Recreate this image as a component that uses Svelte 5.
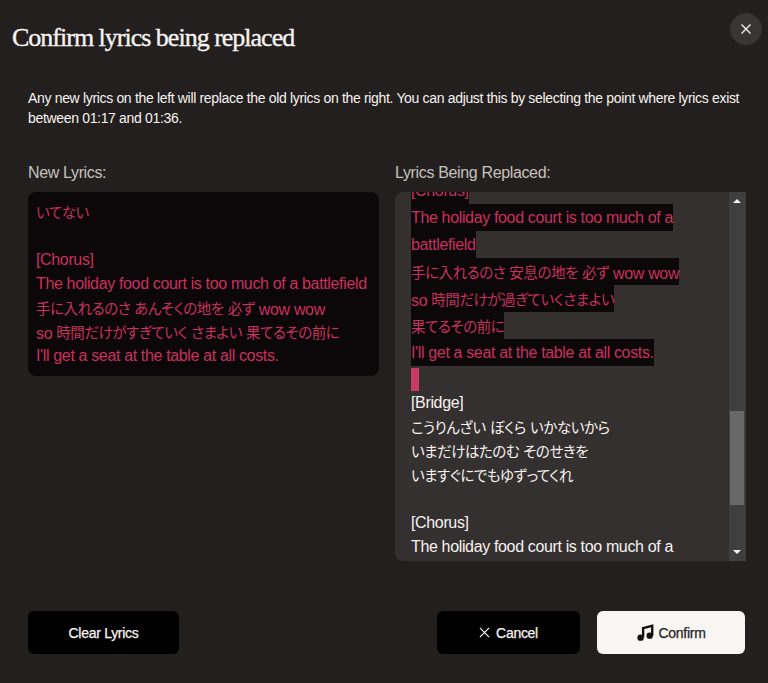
<script lang="ts">
	const newLyrics = [
		'いてない',
		'',
		'[Chorus]',
		'The holiday food court is too much of a battlefield',
		'手に入れるのさ あんそくの地を 必ず wow wow',
		'so 時間だけがすぎていく さまよい 果てるその前に',
		"I'll get a seat at the table at all costs."
	];
	const replaced = [
		'[Chorus]',
		'The holiday food court is too much of a',
		'battlefield',
		'手に入れるのさ 安息の地を 必ず wow wow',
		'so 時間だけが過ぎていくさまよい',
		'果てるその前に',
		"I'll get a seat at the table at all costs."
	];
	const rest = [
		'[Bridge]',
		'こうりんざい ぼくら いかないから',
		'いまだけはたのむ そのせきを',
		'いますぐにでもゆずってくれ',
		'',
		'[Chorus]',
		'The holiday food court is too much of a'
	];

	// japanese runs are set smaller than the latin around them
	function runs(line: string) {
		return line.split(/([\u3040-\u30ff\u4e00-\u9fff]+)/).filter(Boolean);
	}
	const isJa = (s: string) => /[\u3040-\u30ff\u4e00-\u9fff]/.test(s);
</script>

{#snippet lyric(line: string)}
	{#each runs(line) as run}
		{#if isJa(run)}<span class="ja">{run}</span>{:else}{run}{/if}
	{/each}
{/snippet}

<div class="dialog">
	<header class="head">
		<h1>Confirm lyrics being replaced</h1>
		<button type="button" class="close" aria-label="Close">
			<svg width="12" height="12" viewBox="0 0 12 12"><path d="M1.5 1.5l9 9M10.5 1.5l-9 9" /></svg>
		</button>
	</header>

	<p class="intro">
		Any new lyrics on the left will replace the old lyrics on the right. You can adjust this by selecting the point where lyrics exist between 01:17 and 01:36.
	</p>

	<div class="columns">
		<section class="col">
			<div class="label">New Lyrics:</div>
			<div class="new-lyrics">
				{#each newLyrics as line}
					<div class="line">{@render lyric(line)}</div>
				{/each}
			</div>
		</section>

		<section class="col">
			<div class="label">Lyrics Being Replaced:</div>
			<div class="replaced">
				<div class="scroller">
					<div class="content">
						{#each replaced as line}
							<div class="mark">{@render lyric(line)}</div>
						{/each}
						<div class="caret"></div>
						{#each rest as line}
							<div class="line">{@render lyric(line)}</div>
						{/each}
					</div>
				</div>
				<div class="scrollbar">
					<span class="arrow up"></span>
					<span class="thumb"></span>
					<span class="arrow down"></span>
				</div>
			</div>
		</section>
	</div>

	<footer class="actions">
		<button type="button" class="btn dark clear">Clear Lyrics</button>
		<div class="right">
			<button type="button" class="btn dark cancel">
				<svg width="11" height="11" viewBox="0 0 12 12"><path d="M1 1l10 10M11 1L1 11" /></svg>
				Cancel
			</button>
			<button type="button" class="btn light confirm">
				<svg width="19" height="19" viewBox="0 0 24 24">
					<path class="stem" d="M9 18V6.5l11.5-3V16" />
					<circle cx="5.8" cy="18.5" r="4" />
					<circle cx="17.3" cy="16" r="4" />
				</svg>
				Confirm
			</button>
		</div>
	</footer>
</div>

<style>
	:global(body) {
		background: #231f1f;
	}

	.dialog {
		box-sizing: border-box;
		height: 683px;
		background: #231f1f;
		color: #f7f3f0;
		font-family: 'Liberation Sans', 'Noto Sans CJK JP', sans-serif;
		font-size: 16px;
		letter-spacing: -0.022em;
		overflow: hidden;
	}

	.head {
		display: flex;
		justify-content: space-between;
		padding: 13px 6px 0 12px;
		height: 45px;
	}

	h1 {
		margin: 0;
		padding-top: 10px;
		font-family: 'Liberation Serif', serif;
		font-size: 26px;
		line-height: 30px;
		font-weight: 400;
		letter-spacing: -1px;
		-webkit-text-stroke: 0.35px currentColor;
	}

	.close {
		width: 32px;
		height: 32px;
		border: 0;
		border-radius: 50%;
		background: #393535;
		display: flex;
		align-items: center;
		justify-content: center;
		padding: 0;
	}

	.close path,
	.cancel path {
		fill: none;
		stroke: #f7f3f0;
		stroke-width: 1.3;
	}

	.intro {
		margin: 30px 0 0;
		padding: 0 20px 0 28px;
		font-size: 14px;
		line-height: 20px;
		letter-spacing: -0.33px;
	}

	.columns {
		display: grid;
		grid-template-columns: 351px 351px;
		gap: 16px;
		padding: 0 22px 0 28px;
		margin-top: 35px;
	}

	.label {
		font-size: 16px;
		line-height: 20px;
		color: #c6c1bd;
		margin-bottom: 9px;
	}

	.ja {
		font-family: 'Noto Sans CJK JP', sans-serif;
		font-size: 14.5px;
		font-feature-settings: 'palt';
		letter-spacing: -0.45px;
		vertical-align: 1px;
	}

	.new-lyrics {
		box-sizing: border-box;
		height: 184px;
		background: #0c0809;
		border-radius: 8px;
		padding: 8px;
		color: #c9315e;
	}

	.replaced {
		display: flex;
		height: 369px;
		background: #353030;
		border-radius: 8px 0 0 8px;
		overflow: hidden;
	}

	.scroller {
		flex: 1;
		overflow: hidden;
		padding-left: 16px;
	}

	.content {
		margin-top: -15px;
	}

	.mark {
		width: fit-content;
		height: 27px;
		background: #0c0809;
		color: #c9315e;
		line-height: 27px;
		white-space: nowrap;
	}

	.caret {
		width: 8px;
		height: 23px;
		margin: 2px 0 0;
		background: #c93a68;
	}

	.line {
		height: 24px;
		line-height: 24px;
		white-space: nowrap;
	}

	.scrollbar {
		position: relative;
		width: 17px;
		background: #3f3f3f;
	}

	.thumb {
		position: absolute;
		left: 1px;
		top: 219px;
		width: 14px;
		height: 94px;
		background: #686868;
	}

	.arrow {
		position: absolute;
		left: 4px;
		width: 0;
		height: 0;
		border-left: 4px solid transparent;
		border-right: 4px solid transparent;
	}

	.up {
		top: 7px;
		border-bottom: 4px solid #f2f2f2;
	}

	.down {
		bottom: 7px;
		border-top: 4px solid #f2f2f2;
	}

	.actions {
		display: flex;
		justify-content: space-between;
		padding: 0 23px 0 28px;
		margin-top: 50px;
	}

	.right {
		display: flex;
		gap: 17px;
	}

	.btn {
		height: 43px;
		border: 0;
		border-radius: 6px;
		font: inherit;
		font-size: 14px;
		font-weight: 400;
		letter-spacing: -0.02em;
		display: flex;
		align-items: center;
		justify-content: center;
		gap: 6px;
		padding: 0;
		-webkit-text-stroke: 0.25px currentColor;
	}

	.dark {
		background: #000;
		color: #f7f3f0;
	}

	.light {
		background: #f9f5f2;
		color: #231f1f;
	}

	.clear {
		width: 151px;
	}

	.cancel {
		width: 143px;
	}

	.confirm {
		width: 148px;
		gap: 3px;
	}

	.stem {
		fill: none;
		stroke: #111;
		stroke-width: 3;
	}

	.confirm circle {
		fill: #111;
	}
</style>
